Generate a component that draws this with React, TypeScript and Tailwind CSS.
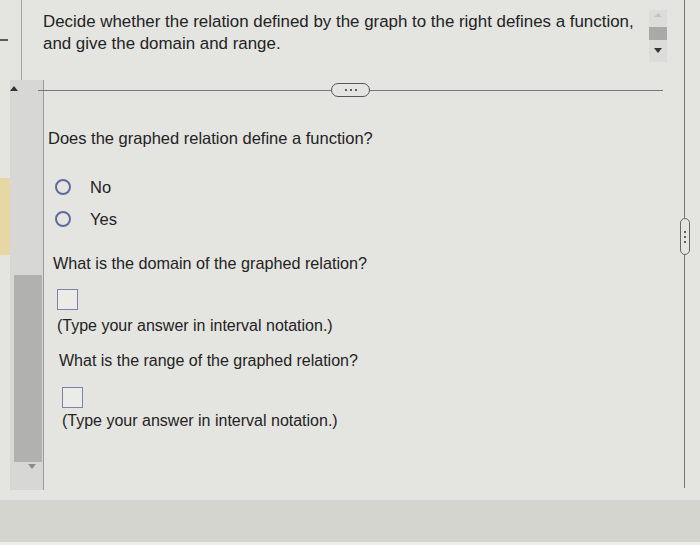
import React from 'react';

function Radio({ label }: { label: string }) {
	return (
		<label className="flex h-[22px] items-center">
			<span className="ml-[11px] h-[16px] w-[16px] rounded-full border-[2px] border-[#5f6b9e]" />
			<span className="ml-[19px] text-[16.5px]">{label}</span>
		</label>
	);
}

function AnswerBox() {
	return <div className="h-[21px] w-[21px] border-[1.5px] border-[#7a83aa] bg-[#ebebe8]" />;
}

export default function App() {
	return (
		<div className="flex h-[545px] w-[700px] flex-col overflow-hidden bg-[#e4e4e1] font-['Liberation_Sans',Arial,sans-serif] text-[#232323]">
			<div className="flex h-[500px]">
				{/* left frame with scrollbar */}
				<div className="flex w-[44px] shrink-0 flex-col">
					<div className="flex h-[80px]">
						<div className="w-[22px] border-r border-[#a2a2a0] pt-[39px]">
							<div className="h-[2px] w-[8px] bg-[#5a5a5a]" />
						</div>
					</div>
					<div className="flex flex-1 pb-[10px]">
						<div className="flex w-[10px] flex-col">
							<div className="h-[98px]" />
							<div className="h-[77px] bg-[#e6d7a4]" />
						</div>
						<div className="flex w-[34px] flex-col border-r border-[#9c9c9a] bg-[#d7d7d5]">
							<div className="mt-[6px] h-0 w-0 border-x-[4px] border-b-[5px] border-x-transparent border-b-[#333]" />
							<div className="ml-[4px] mr-[1px] mt-[184px] h-[187px] bg-[#b1b1af]" />
							<div className="ml-[18px] mt-[2px] h-0 w-0 border-x-[4px] border-t-[5px] border-x-transparent border-t-[#8a8a8a]" />
						</div>
					</div>
				</div>

				{/* main question area */}
				<div className="flex min-w-0 flex-1">
					<div className="min-w-0 flex-1">
						<p className="-ml-[1px] mt-[11px] whitespace-nowrap text-[16.9px] leading-[22px]">
							Decide whether the relation defined by the graph to the right defines a function,
							<br />
							and give the domain and range.
						</p>
						<div className="-ml-[6px] mt-[28px] flex h-[14px] w-[625px] items-center">
							<div className="h-px flex-1 bg-[#777]" />
							<div className="flex h-[14px] w-[39px] items-center justify-center gap-[3px] rounded-full border-[1.5px] border-[#555]">
								<span className="h-[2px] w-[2px] rounded-full bg-[#333]" />
								<span className="h-[2px] w-[2px] rounded-full bg-[#333]" />
								<span className="h-[2px] w-[2px] rounded-full bg-[#333]" />
							</div>
							<div className="h-px flex-1 bg-[#777]" />
						</div>
						<p className="ml-[4px] mt-[30px] text-[16.5px] leading-[22px]">
							Does the graphed relation define a function?
						</p>
						<div className="mt-[27px]">
							<Radio label="No" />
						</div>
						<div className="mt-[10px]">
							<Radio label="Yes" />
						</div>
						<p className="ml-[9px] mt-[22px] text-[16.2px] leading-[22px]">
							What is the domain of the graphed relation?
						</p>
						<div className="ml-[13px] mt-[15px]">
							<AnswerBox />
						</div>
						<p className="ml-[13px] mt-[6px] text-[16px] leading-[20px]">
							(Type your answer in interval notation.)
						</p>
						<p className="ml-[15px] mt-[14px] text-[16px] leading-[22px]">
							What is the range of the graphed relation?
						</p>
						<div className="ml-[18px] mt-[15px]">
							<AnswerBox />
						</div>
						<p className="ml-[18px] mt-[3px] text-[16px] leading-[20px]">
							(Type your answer in interval notation.)
						</p>
					</div>

					{/* small scrollbar at top right */}
					<div className="mr-[13px] mt-[10px] flex h-[52px] w-[18px] shrink-0 flex-col items-center bg-[#dcdcda]">
						<div className="mt-[3px] h-0 w-0 border-x-[4px] border-b-[4px] border-x-transparent border-b-[#c4c4c2]" />
						<div className="mt-[10px] h-[13px] w-[18px] bg-[#a9a9a7]" />
						<div className="mt-[8px] h-0 w-0 border-x-[4px] border-t-[5px] border-x-transparent border-t-[#333]" />
					</div>
				</div>

				{/* right edge with resize handle */}
				<div className="flex w-[20px] shrink-0 flex-col pb-[12px]">
					<div className="ml-[0px] flex flex-1 flex-col items-start">
						<div className="ml-[4px] h-[218px] w-px bg-[#777]" />
						<div className="flex h-[37px] w-[10px] flex-col items-center justify-center gap-[3px] rounded-full border-[1.5px] border-[#666]">
							<span className="h-[2px] w-[2px] rounded-full bg-[#333]" />
							<span className="h-[2px] w-[2px] rounded-full bg-[#333]" />
							<span className="h-[2px] w-[2px] rounded-full bg-[#333]" />
						</div>
						<div className="ml-[4px] w-px flex-1 bg-[#777]" />
					</div>
				</div>
			</div>
			<div className="flex flex-1 flex-col bg-[#d4d5cf]">
				<div className="flex-1" />
				<div className="h-[3px] bg-[#ededea]" />
			</div>
		</div>
	);
}
